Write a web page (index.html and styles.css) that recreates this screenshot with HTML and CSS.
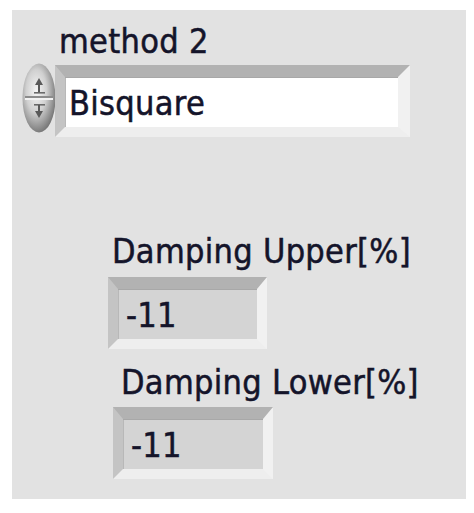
FILE: index.html
```html
<!DOCTYPE html>
<html>
<head>
<meta charset="utf-8">
<link rel="stylesheet" href="styles.css">
</head>
<body>
<div class="panel">
  <div class="label label-method">method 2</div>
  <div class="ring-row">
    <svg class="spinner" width="34" height="70" viewBox="0 0 34 70">
      <defs>
        <radialGradient id="sg" cx="0.42" cy="0.4" r="0.62">
          <stop offset="0" stop-color="#f6f6f6"/>
          <stop offset="0.5" stop-color="#d0d0d0"/>
          <stop offset="1" stop-color="#767676"/>
        </radialGradient>
      </defs>
      <ellipse cx="17" cy="35" rx="16.5" ry="34.5" fill="url(#sg)"/>
      <rect x="3" y="33" width="28" height="2" fill="#8c8c8c"/>
      <rect x="3" y="35" width="28" height="2" fill="#f2f2f2"/>
      <path d="M17 15 L13 22 L16 22 L16 29 L18 29 L18 22 L21 22 Z" fill="#5a5a5a"/>
      <rect x="12" y="29" width="11" height="1.6" fill="#6a6a6a"/>
      <rect x="12" y="41" width="11" height="1.6" fill="#6a6a6a"/>
      <path d="M17 55 L13 48 L16 48 L16 42 L18 42 L18 48 L21 48 Z" fill="#5a5a5a"/>
    </svg>
    <div class="frame string-box"><span class="value">Bisquare</span></div>
  </div>
  <div class="label label-upper">Damping Upper[%]</div>
  <div class="frame num num-upper"><span class="value">-11</span></div>
  <div class="label label-lower">Damping Lower[%]</div>
  <div class="frame num num-lower"><span class="value">-11</span></div>
</div>
</body>
</html>
```
FILE: styles.css
```css
html, body {
  margin: 0;
  padding: 0;
  background: #ffffff;
}

.panel {
  margin: 10px 0 0 12px;
  width: 454px;
  height: 489px;
  box-sizing: border-box;
  padding-top: 12px;
  background: #e2e2e2;
  display: flex;
  flex-direction: column;
  align-items: flex-start;
  font-family: "DejaVu Sans Condensed", "DejaVu Sans", sans-serif;
  font-stretch: condensed;
  font-size: 34px;
  letter-spacing: 0.3px;
  color: #14142a;
  -webkit-text-stroke: 0.5px #14142a;
}

.label {
  line-height: 38px;
  white-space: nowrap;
}

.label-method { margin-left: 47px; }

.ring-row {
  display: flex;
  align-items: flex-start;
  margin-left: 10px;
  margin-top: 3px;
}

.spinner {
  display: block;
  flex: none;
  margin-right: -1px;
}

.frame {
  box-sizing: border-box;
  border-style: solid;
  border-top-color: #b2b2b2;
  border-left-color: #c4c4c4;
  border-right-color: #f1f1f1;
  border-bottom-color: #eeeeee;
  box-shadow: inset 0 1px 0 #a8a8a8, inset 1px 0 0 #b8b8b8;
  display: flex;
}

.frame .value {
  line-height: 50px;
  white-space: nowrap;
  position: relative;
  top: 1px;
}

.string-box {
  margin-top: 2px;
  width: 355px;
  height: 72px;
  border-width: 12px 12px 10px 10px;
  background: #ffffff;
  padding-left: 4px;
}

.num {
  height: 72px;
  border-width: 12px 10px 10px 10px;
  background: #d4d4d4;
  padding-left: 8px;
}

.label-upper {
  margin-left: 100px;
  margin-top: 95px;
}

.num-upper {
  margin-left: 96px;
  margin-top: 7px;
  width: 159px;
}

.label-lower {
  margin-left: 109px;
  margin-top: 14px;
}

.num-lower {
  margin-left: 101px;
  margin-top: 6px;
  width: 160px;
}
```
